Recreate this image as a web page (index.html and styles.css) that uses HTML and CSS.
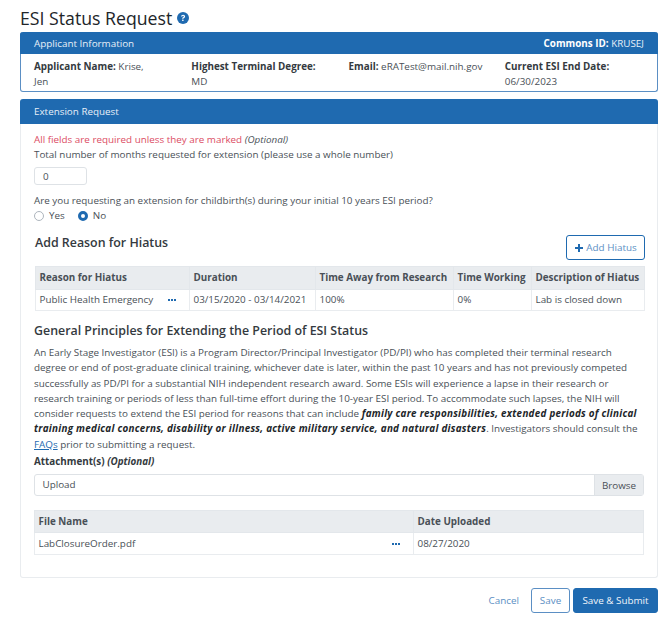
FILE: index.html
```html
<!DOCTYPE html>
<html lang="en">
<head>
<meta charset="utf-8">
<title>ESI Status Request</title>
<link rel="stylesheet" href="styles.css">
</head>
<body>
<main class="page">
  <h1 class="title">ESI Status Request
    <svg class="help" viewBox="0 0 24 24" aria-hidden="true"><circle cx="12" cy="12" r="12" fill="#1f6ab0"/><path d="M8 9.2c0-2.4 1.9-3.9 4.2-3.9 2.2 0 4 1.5 4 3.5 0 1.7-1 2.5-2.1 3.2-.8.5-1.1.8-1.1 1.6h-2.6c0-1.9.7-2.6 1.8-3.3.8-.5 1.3-.9 1.3-1.5 0-.7-.6-1.2-1.4-1.2-.9 0-1.4.6-1.5 1.6z" fill="#fff"/><rect x="10.3" y="15.2" width="2.8" height="2.8" rx=".6" fill="#fff"/></svg>
  </h1>
  <section class="panel panel-info">
    <header class="panel-head head-info"><span>Applicant Information</span><span><b>Commons ID:</b> KRUSEJ</span></header>
    <div class="info-row">
      <div class="info-a"><b>Applicant Name:</b> Krise, Jen</div>
      <div class="info-b"><b>Highest Terminal Degree:</b> MD</div>
      <div class="info-c"><b>Email:</b> eRATest@mail.nih.gov</div>
      <div class="info-d"><b>Current ESI End Date:</b> 06/30/2023</div>
    </div>
  </section>
  <section class="panel panel-ext">
    <header class="panel-head head-ext">Extension Request</header>
    <div class="panel-body">
      <p class="req"><span class="red">All fields are required unless they are marked</span> <i>(Optional)</i></p>
      <p class="line">Total number of months requested for extension (please use a whole number)</p>
      <div class="months">0</div>
      <p class="line">Are you requesting an extension for childbirth(s) during your initial 10 years ESI period?</p>
      <div class="radios">
        <span class="radio"></span><span class="radio-label">Yes</span>
        <span class="radio on"></span><span>No</span>
      </div>
      <div class="hiatus-head">
        <h2 class="h-add">Add Reason for Hiatus</h2>
        <button class="btn-add"><svg class="plus" viewBox="0 0 10 10" aria-hidden="true"><path d="M4 1h2v3h3v2H6v3H4V6H1V4h3z" fill="#1f6ab0"/></svg>Add Hiatus</button>
      </div>
      <table class="grid hiatus">
        <thead><tr><th class="c1">Reason for Hiatus</th><th class="c2">Duration</th><th class="c3">Time Away from Research</th><th class="c4">Time Working</th><th>Description of Hiatus</th></tr></thead>
        <tbody><tr><td><span class="with-dots">Public Health Emergency<span class="dots"><i></i><i></i><i></i></span></span></td><td>03/15/2020 - 03/14/2021</td><td>100%</td><td>0%</td><td>Lab is closed down</td></tr></tbody>
      </table>
      <h2 class="h-gen">General Principles for Extending the Period of ESI Status</h2>
      <p class="para">An Early Stage Investigator (ESI) is a Program Director/Principal Investigator (PD/PI) who has completed their terminal research degree or end of post-graduate clinical training, whichever date is later, within the past 10 years and has not previously competed successfully as PD/PI for a substantial NIH independent research award. Some ESIs will experience a lapse in their research or research training or periods of less than full-time effort during the 10-year ESI period. To accommodate such lapses, the NIH will consider requests to extend the ESI period for reasons that can include <b><i>family care responsibilities, extended periods of clinical training medical concerns, disability or illness, active military service, and natural disasters</i></b>. Investigators should consult the <a href="#">FAQs</a> prior to submitting a request.</p>
      <p class="attach"><b>Attachment(s) <i>(Optional)</i></b></p>
      <div class="upload"><span class="upload-text">Upload</span><span class="browse">Browse</span></div>
      <table class="grid files">
        <thead><tr><th class="f1">File Name</th><th>Date Uploaded</th></tr></thead>
        <tbody><tr><td><span class="with-dots">LabClosureOrder.pdf<span class="dots"><i></i><i></i><i></i></span></span></td><td>08/27/2020</td></tr></tbody>
      </table>
    </div>
  </section>
  <footer class="actions">
    <a class="cancel" href="#">Cancel</a>
    <button class="btn-save">Save</button>
    <button class="btn-submit">Save &amp; Submit</button>
  </footer>
</main>
</body>
</html>
```
FILE: styles.css
```css
* { box-sizing: border-box; }
html, body { margin: 0; padding: 0; background: #fff; }
body { font-family: "Open Sans", "Noto Sans", sans-serif; font-size: 9.85px; line-height: 15.3px; color: #495057; }
.page { width: 672px; height: 620px; overflow: hidden; padding: 3px 14px 0 20px; }
.title { margin: 0; height: 29px; font-size: 17.7px; line-height: 26px; font-weight: 400; color: #212529; display: flex; align-items: center; gap: 5px; }
.help { width: 12px; height: 12px; margin-top: 1px; }
.panel { border-radius: 3px; }
.panel-head { background: #1f6ab0; color: #e8f0f8; display: flex; justify-content: space-between; border-radius: 3px 3px 0 0; padding: 0 14px 0 14px; align-items: center; }
.panel-head b { color: #fff; }
.panel-info { border: 1px solid #5b8fc4; border-top: 0; height: 60px; }
.head-info { height: 22px; margin: 0 -1px; padding-top: 1px; }
.info-row { display: flex; padding: 5px 13px 0; }
.info-row b { color: #343a40; }
.info-a { width: 158px; padding-right: 35px; }
.info-b { width: 158px; padding-right: 20px; }
.info-c { width: 157px; white-space: nowrap; }
.info-d { width: 140px; }
.panel-ext { margin-top: 7px; height: 479px; border: 1px solid #e9ecef; border-top: 0; }
.head-ext { height: 25px; margin: 0 -1px; }
.panel-body { padding: 8px 12px 0 13px; }
p { margin: 0; }
.req { height: 15px; }
.red { color: #dc4c64; }
.line { height: 15px; }
.months { width: 53px; height: 18px; margin: 5px 0 8px; border: 1px solid #dee2e6; border-radius: 3px; padding-left: 8px; line-height: 16px; }
.radios { display: flex; align-items: center; height: 15px; }
.radio { width: 10px; height: 10px; border-radius: 50%; border: 1px solid #adb5bd; margin-right: 5px; }
.radio.on { border: 3px solid #1f6ab0; background: #fff; }
.radio-label { margin-right: 13px; }
.hiatus-head { display: flex; justify-content: space-between; align-items: flex-start; height: 29px; margin-top: 9px; padding-left: 1px; }
.h-add { margin: 2px 0 0; font-size: 12.4px; line-height: 18px; font-weight: 600; color: #343a40; }
.btn-add { font: inherit; color: #5b8fc4; width: 79px; height: 25px; margin: 3px 0 0; padding: 0; background: #fff; border: 1px solid #1f6ab0; border-radius: 3px; display: flex; align-items: center; justify-content: center; gap: 2px; }
.plus { width: 10px; height: 10px; }
.grid { border-collapse: collapse; width: 100%; table-layout: fixed; }
.grid th { background: #e9ecef; font-weight: 700; text-align: left; padding: 0 3.5px; height: 23px; border: 1px solid #e3e7eb; color: #495057; white-space: nowrap; }
.grid td { padding: 0 3.5px; height: 21px; border: 1px solid #e9ecef; white-space: nowrap; }
.hiatus { width: 610px; margin-left: 1px; margin-top: 5px; }
.c1 { width: 154px; }
.c2 { width: 126px; }
.c3 { width: 138px; }
.c4 { width: 78px; }
.with-dots { display: flex; justify-content: space-between; align-items: center; padding-right: 10px; }
.dots { display: inline-flex; gap: 1px; }
.dots i { width: 2px; height: 2px; background: #1f6ab0; }
.h-gen { margin: 10px 0 0; height: 24px; font-size: 12.4px; line-height: 20px; font-weight: 600; color: #343a40; }
.para { width: 612px; }
.para b { color: #212529; letter-spacing: .27px; }
a { color: #1f6ab0; }
.attach { color: #343a40; margin-top: 2px; height: 20px; }
.upload { display: flex; width: 610px; height: 22px; border: 1px solid #dee2e6; border-radius: 3px; justify-content: space-between; align-items: center; padding-left: 7.5px; }
.browse { background: #e9ecef; width: 49px; height: 20px; text-align: center; line-height: 20px; border-left: 1px solid #dee2e6; }
.files { width: 610px; margin-top: 14px; }
.f1 { width: 379px; }
.grid.files th { height: 22px; }
.grid.files td { height: 22px; }
.actions { display: flex; justify-content: flex-end; align-items: center; margin-top: 10px; }
.cancel { color: #5b8fc4; text-decoration: none; margin-right: 12px; }
.btn-save, .btn-submit { font: inherit; height: 25px; padding: 0; border-radius: 3px; }
.btn-save { width: 39px; background: #fff; color: #5b8fc4; border: 1px solid #5b8fc4; margin-right: 3px; }
.btn-submit { width: 85px; background: #1f6ab0; color: #f0f5fa; border: 1px solid #1f6ab0; }
```
